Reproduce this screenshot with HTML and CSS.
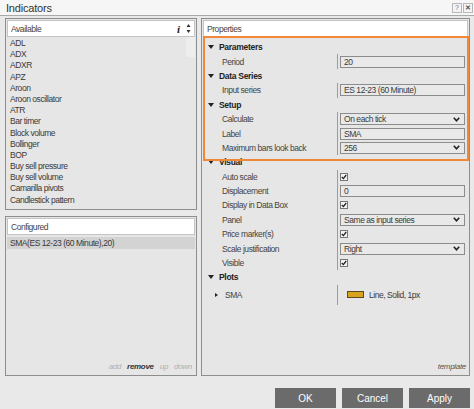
FILE: index.html
```html
<!DOCTYPE html>
<html>
<head>
<meta charset="utf-8">
<link rel="stylesheet" href="styles.css">
</head>
<body>
<div class="window">
  <div class="titlebar">
    <span class="title">Indicators</span>
    <div class="winbtns"><span class="wb">?</span><span class="wb wb-x">✕</span></div>
  </div>
  <div class="main">
    <div class="leftcol">
      <section class="panel avail">
        <div class="phead">
          <span class="ptitle">Available</span>
          <span class="info">i</span>
          <span class="spin"><svg width="5" height="11" viewBox="0 0 5 11"><path d="M0.5 4 L2.5 1 L4.5 4 Z M0.5 7 L2.5 10 L4.5 7 Z" fill="#333"/></svg></span>
        </div>
        <div class="pbody listwrap">
          <ul class="list">
            <li>ADL</li><li>ADX</li><li>ADXR</li><li>APZ</li><li>Aroon</li>
            <li>Aroon oscillator</li><li>ATR</li><li>Bar timer</li><li>Block volume</li>
            <li>Bollinger</li><li>BOP</li><li>Buy sell pressure</li><li>Buy sell volume</li>
            <li>Camarilla pivots</li><li>Candlestick pattern</li>
          </ul>
          <div class="scroll"><div class="thumb"></div></div>
        </div>
      </section>
      <section class="panel config">
        <div class="phead"><span class="ptitle">Configured</span></div>
        <div class="pbody cbody">
          <div class="sel">SMA(ES 12-23 (60 Minute),20)</div>
          <div class="actions"><span class="dim">add</span><span class="on">remove</span><span class="dim">up</span><span class="dim">down</span></div>
        </div>
      </section>
    </div>
    <section class="panel props">
      <div class="phead"><span class="ptitle">Properties</span></div>
      <div class="pbody pgrid">
        <div class="rows">
          <div class="cat"><span class="tri-d"></span>Parameters</div>
          <div class="row"><span class="lbl">Period</span><span class="val"><span class="box">20</span></span></div>
          <div class="cat"><span class="tri-d"></span>Data Series</div>
          <div class="row"><span class="lbl">Input series</span><span class="val"><span class="box">ES 12-23 (60 Minute)</span></span></div>
          <div class="cat"><span class="tri-d"></span>Setup</div>
          <div class="row"><span class="lbl">Calculate</span><span class="val"><span class="box dd">On each tick<svg class="chev" width="7" height="5" viewBox="0 0 7 5"><path d="M0.8 0.8 L3.5 3.8 L6.2 0.8" fill="none" stroke="#222" stroke-width="1.6"/></svg></span></span></div>
          <div class="row"><span class="lbl">Label</span><span class="val"><span class="box">SMA</span></span></div>
          <div class="row"><span class="lbl">Maximum bars look back</span><span class="val"><span class="box dd">256<svg class="chev" width="7" height="5" viewBox="0 0 7 5"><path d="M0.8 0.8 L3.5 3.8 L6.2 0.8" fill="none" stroke="#222" stroke-width="1.6"/></svg></span></span></div>
          <div class="cat"><span class="tri-d"></span>Visual</div>
          <div class="row"><span class="lbl">Auto scale</span><span class="val"><span class="chk"><svg width="6" height="6" viewBox="0 0 6 6"><path d="M0.8 3 L2.4 4.6 L5.2 1" fill="none" stroke="#222" stroke-width="1.3"/></svg></span></span></div>
          <div class="row"><span class="lbl">Displacement</span><span class="val"><span class="box">0</span></span></div>
          <div class="row"><span class="lbl">Display in Data Box</span><span class="val"><span class="chk"><svg width="6" height="6" viewBox="0 0 6 6"><path d="M0.8 3 L2.4 4.6 L5.2 1" fill="none" stroke="#222" stroke-width="1.3"/></svg></span></span></div>
          <div class="row"><span class="lbl">Panel</span><span class="val"><span class="box dd">Same as input series<svg class="chev" width="7" height="5" viewBox="0 0 7 5"><path d="M0.8 0.8 L3.5 3.8 L6.2 0.8" fill="none" stroke="#222" stroke-width="1.6"/></svg></span></span></div>
          <div class="row"><span class="lbl">Price marker(s)</span><span class="val"><span class="chk"><svg width="6" height="6" viewBox="0 0 6 6"><path d="M0.8 3 L2.4 4.6 L5.2 1" fill="none" stroke="#222" stroke-width="1.3"/></svg></span></span></div>
          <div class="row"><span class="lbl">Scale justification</span><span class="val"><span class="box dd">Right<svg class="chev" width="7" height="5" viewBox="0 0 7 5"><path d="M0.8 0.8 L3.5 3.8 L6.2 0.8" fill="none" stroke="#222" stroke-width="1.6"/></svg></span></span></div>
          <div class="row"><span class="lbl">Visible</span><span class="val"><span class="chk"><svg width="6" height="6" viewBox="0 0 6 6"><path d="M0.8 3 L2.4 4.6 L5.2 1" fill="none" stroke="#222" stroke-width="1.3"/></svg></span></span></div>
          <div class="cat"><span class="tri-d"></span>Plots</div>
          <div class="row plot"><span class="lbl"><span class="tri-r"></span>SMA</span><span class="val"><span class="swatch"></span>Line, Solid, 1px</span></div>
        </div>
        <div class="template">template</div>
        <div class="highlight"></div>
      </div>
    </section>
  </div>
  <div class="footer">
    <button class="btn">OK</button>
    <button class="btn">Cancel</button>
    <button class="btn">Apply</button>
  </div>
</div>
</body>
</html>
```

FILE: styles.css
```css
* { box-sizing: border-box; }
html, body {
  margin: 0;
  padding: 0;
  width: 474px;
  height: 409px;
  overflow: hidden;
  background: #e9e9e9;
  font-family: "Liberation Sans", Arial, sans-serif;
  color: #3a3a3a;
}
.window {
  width: 474px;
  height: 409px;
  display: flex;
  flex-direction: column;
}
.titlebar {
  height: 16px;
  flex: none;
  background: #f6f6f6;
  border-bottom: 1px solid #a9a9a9;
  display: flex;
  align-items: center;
  justify-content: space-between;
  padding: 0 1px 0 6px;
}
.title {
  font-size: 11px;
  letter-spacing: -0.2px;
  color: #333;
  margin-top: 1px;
}
.winbtns { display: flex; gap: 1px; margin-top: 1px; }
.wb {
  width: 10px;
  height: 10px;
  border: 1px solid #b8b8b8;
  background: #f4f4f4;
  font-size: 7px;
  line-height: 8px;
  text-align: center;
  color: #777;
}
.wb-x { color: #555; font-weight: bold; }

.main {
  display: flex;
  gap: 4px;
  padding: 2px 0 0 5px;
  height: 360px;
  flex: none;
}
.leftcol {
  width: 192px;
  display: flex;
  flex-direction: column;
  gap: 6px;
}
.panel {
  border: 1px solid #8e8e8e;
  padding: 1px;
  display: flex;
  flex-direction: column;
  background: #e6e6e6;
  position: relative;
}
.avail { height: 192px; }
.config { height: 160px; }
.props { width: 269px; height: 358px; }
.phead {
  height: 17px;
  flex: none;
  background: #fff;
  border: 1px solid #c4c4c4;
  display: flex;
  align-items: center;
  padding: 0 3px 0 3px;
  font-size: 8.5px;
  letter-spacing: -0.45px;
  color: #444;
}
.ptitle { flex: 1; }
.info {
  font-family: "Liberation Serif", serif;
  font-style: italic;
  font-weight: bold;
  font-size: 11px;
  letter-spacing: 0;
  color: #222;
  margin-right: 6px;
}
.spin { display: flex; align-items: center; margin-right: 0; }
.pbody { flex: 1; position: relative; }

.listwrap { display: flex; }
.list {
  list-style: none;
  margin: 0;
  padding: 1px 0 0 3px;
  flex: 1;
}
.list li {
  font-size: 8.5px;
  letter-spacing: -0.45px;
  height: 11.2px;
  line-height: 11.2px;
  color: #3a3a3a;
}
.scroll { width: 9px; }
.thumb { height: 20px; background: #eeeeee; }

.cbody { display: flex; flex-direction: column; }
.sel {
  margin-top: 2px;
  height: 12px;
  line-height: 12px;
  background: #d3d3d3;
  font-size: 8.5px;
  letter-spacing: -0.45px;
  padding-left: 3px;
  color: #3a3a3a;
}
.actions {
  margin-top: auto;
  display: flex;
  justify-content: flex-end;
  gap: 6px;
  font-size: 8px;
  letter-spacing: -0.3px;
  padding: 0 3px 3px 0;
}
.dim { color: #b0b0b0; font-style: italic; }
.on { color: #333; font-style: italic; font-weight: bold; }

.pgrid { display: flex; flex-direction: column; }
.rows { padding-top: 3px; }
.cat, .row {
  height: 14.4px;
  display: flex;
  align-items: center;
  font-size: 8.5px;
  letter-spacing: -0.45px;
}
.cat {
  font-weight: bold;
  letter-spacing: -0.3px;
  color: #222;
  padding-left: 5px;
}
.tri-d {
  width: 0; height: 0;
  border-left: 3px solid transparent;
  border-right: 3px solid transparent;
  border-top: 4px solid #222;
  margin-right: 5px;
}
.tri-r {
  width: 0; height: 0;
  border-top: 2.5px solid transparent;
  border-bottom: 2.5px solid transparent;
  border-left: 3px solid #222;
  margin-right: 7px;
}
.lbl {
  width: 134px;
  padding-left: 19px;
  color: #444;
  display: flex;
  align-items: center;
}
.plot .lbl { padding-left: 12px; }
.val {
  flex: 1;
  height: 100%;
  border-left: 1px solid #9c9c9c;
  display: flex;
  align-items: center;
  padding: 0 3px 0 2px;
  color: #3a3a3a;
}
.box {
  flex: 1;
  height: 12px;
  border: 1px solid #8c8c8c;
  background: #e9e9e9;
  display: flex;
  align-items: center;
  padding: 0 4px 0 3px;
  font-size: 8.5px;
}
.dd { justify-content: space-between; }
.chev { display: block; }
.chk {
  width: 8px;
  height: 8px;
  border: 1px solid #777;
  background: #f4f4f4;
  display: flex;
  align-items: center;
  justify-content: center;
}
.plot { height: 20px; }
.plot .val { padding-left: 9px; }
.swatch {
  width: 17px;
  height: 7px;
  background: #d9a21f;
  border: 1px solid #5a4a20;
  margin-right: 5px;
}
.template {
  margin-top: auto;
  align-self: flex-end;
  font-size: 8px;
  letter-spacing: -0.3px;
  font-style: italic;
  color: #555;
  padding: 0 2px 3px 0;
}
.highlight {
  position: absolute;
  left: 0;
  top: -1px;
  width: 266px;
  height: 125px;
  border: 2px solid #f0883a;
  pointer-events: none;
}
.footer {
  flex: 1;
  display: flex;
  justify-content: flex-end;
  align-items: flex-start;
  gap: 6px;
  padding: 12px 4px 0 0;
}
.btn {
  width: 61px;
  height: 20px;
  border: none;
  background: #6b6b6b;
  color: #fff;
  font-family: "Liberation Sans", Arial, sans-serif;
  font-size: 10px;
  padding: 0;
}
```
